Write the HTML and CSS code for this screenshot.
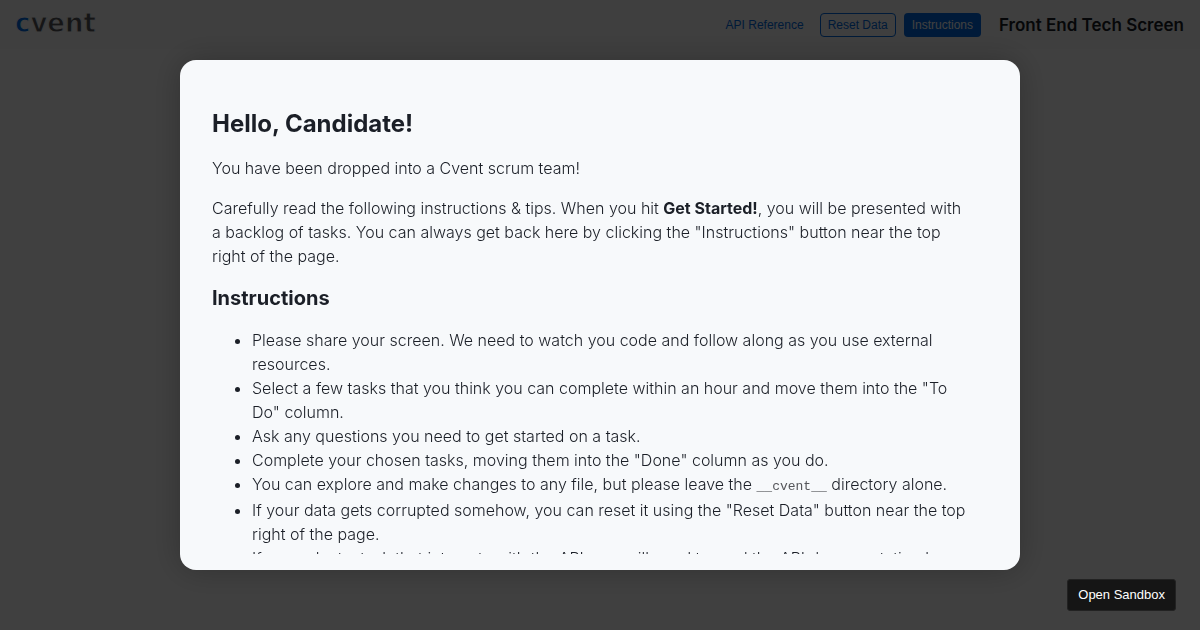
FILE: index.html
```
<!DOCTYPE html>
<html lang="en">
<head>
    <meta charset="UTF-8">
    <meta name="viewport" content="width=device-width, initial-scale=1.0">
    <title>Front End Tech Screen</title>
    <link rel="stylesheet" href="styles.css">
</head>
<body>
    <header class="header">
        <svg class="logo" width="88" height="32" viewBox="0 0 88 32" role="img" aria-label="cvent">
            <text class="logo-text" x="-1" y="23"><tspan class="logo-c">c</tspan>vent</text>
        </svg>
        <nav class="nav">
            <a class="btn link" href="#api">API Reference</a>
            <button class="btn outline" type="button">Reset Data</button>
            <button class="btn primary" type="button">Instructions</button>
        </nav>
        <h1 class="title">Front End Tech Screen</h1>
    </header>

    <div class="overlay">
        <div class="modal" role="dialog" aria-modal="true" aria-labelledby="hello">
            <div class="modal-content">
                <h2 id="hello">Hello, Candidate!</h2>
                <p>You have been dropped into a Cvent scrum team!</p>
                <p>
                    Carefully read the following instructions &amp; tips. When you hit <strong>Get Started!</strong>, you will be presented with<br>
                    a backlog of tasks. You can always get back here by clicking the "Instructions" button near the top<br>
                    right of the page.
                </p>
                <h3>Instructions</h3>
                <ul>
                    <li>Please share your screen. We need to watch you code and follow along as you use external resources.</li>
                    <li>Select a few tasks that you think you can complete within an hour and move them into the "To<br> Do" column.</li>
                    <li>Ask any questions you need to get started on a task.</li>
                    <li>Complete your chosen tasks, moving them into the "Done" column as you do.</li>
                    <li>You can explore and make changes to any file, but please leave the <code>__cvent__</code> directory alone.</li>
                    <li>If your data gets corrupted somehow, you can reset it using the "Reset Data" button near the top right of the page.</li>
                    <li>If you select a task that interacts with the API, you will need to read the API documentation by clicking the "API Reference" link.</li>
                </ul>
            </div>
        </div>
    </div>

    <button class="sandbox" type="button">Open Sandbox</button>
</body>
</html>
```

FILE: styles.css
```
* {
    box-sizing: border-box;
}
body {
    margin: 0;
    font-family: Inter, Roboto, sans-serif;
    font-size: 16px;
    font-weight: 300;
    line-height: 24px;
    color: #1b1f27;
    background-color: #ffffff;
}
.header {
    display: flex;
    align-items: center;
    padding: 9px 16px 8px;
    background-color: #fafafa;
}
.logo-text {
    font-family: "DejaVu Sans", sans-serif;
    font-size: 26px;
    font-weight: 700;
    fill: #55565a;
    stroke: #fafafa;
    stroke-width: 1px;
}
.logo-c {
    fill: #006ae1;
}
.nav {
    display: flex;
    gap: 8px;
    margin-left: auto;
    margin-right: 18px;
}
.btn {
    padding: 0 7px;
    border: 1px solid transparent;
    border-radius: 4px;
    font-family: "Liberation Sans", Arial, sans-serif;
    font-size: 12px;
    font-weight: 400;
    line-height: 22px;
    text-decoration: none;
    cursor: pointer;
}
.link {
    color: #006ae1;
}
.outline {
    color: #006ae1;
    background-color: transparent;
    border-color: #006ae1;
}
.primary {
    color: #ffffff;
    background-color: #006ae1;
}
.title {
    margin: 0;
    font-size: 17px;
    font-weight: 600;
}

/* Instructions modal */
.overlay {
    position: fixed;
    inset: 0;
    padding: 60px 15%;
    background-color: rgba(0, 0, 0, 0.75);
}
.modal {
    height: 100%;
    padding: 16px 32px;
    border-radius: 16px;
    background-color: #f7f9fb;
    box-shadow: 0 0 32px rgba(0, 0, 0, 0.25);
}
.modal-content {
    height: 100%;
    overflow: auto;
    scrollbar-width: none;
}
h2 {
    margin: 32px 0 16px;
    font-size: 24px;
    font-weight: 700;
    line-height: 32px;
}
h3 {
    margin: 16px 0;
    font-size: 20px;
    font-weight: 700;
    line-height: 28px;
}
p {
    margin: 16px 0;
}
ul {
    margin: 16px 0;
    padding-left: 40px;
}
strong {
    font-weight: 700;
}
code {
    font-family: "Liberation Mono", monospace;
    font-size: 13px;
    line-height: 22px;
    color: #55565a;
}

.sandbox {
    position: fixed;
    right: 24px;
    bottom: 19px;
    padding: 0 10px;
    border: 1px solid #222222;
    border-radius: 3px;
    font-family: "Liberation Sans", Arial, sans-serif;
    font-size: 13px;
    line-height: 30px;
    color: #ffffff;
    background-color: #151515;
    cursor: pointer;
}
```
